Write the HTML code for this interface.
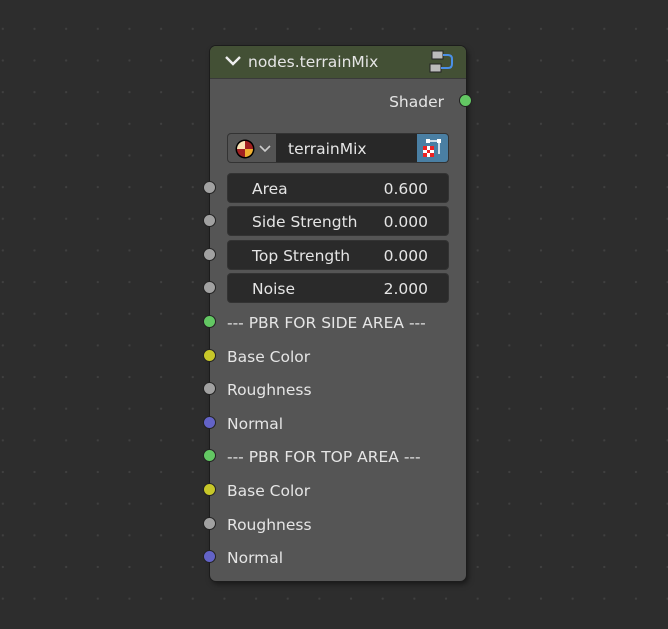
<!DOCTYPE html>
<html><head><style>
*{margin:0;padding:0;box-sizing:border-box}
body{width:668px;height:629px;overflow:hidden;background:#2d2d2d;
background-image:radial-gradient(#404040 1px,transparent 1.3px);background-size:31.67px 31.67px;background-position:-13px 13px;
font-family:"DejaVu Sans","Liberation Sans",sans-serif;color:#e5e5e5;font-size:15.5px;position:relative}
.node{position:absolute;left:210px;top:46px;width:256px;height:535px;background:#555;border-radius:6px;box-shadow:0 0 0 1px #1c1c1c,2px 3px 6px rgba(0,0,0,.5)}
.hdr{position:absolute;left:0;top:0;width:256px;height:33px;background:#435035;border-radius:6px 6px 0 0;border-bottom:1px solid #3a3a3a}
.t{position:absolute;white-space:nowrap;line-height:20px;margin-top:1px}
.s{position:absolute;width:13px;height:13px;border-radius:50%;border:1px solid #222}
.f{position:absolute;left:17px;width:222px;height:30px;background:#2a2a2a;border-radius:4px;border:1px solid #333}
.f span{position:absolute;top:5px;line-height:20px}
</style></head><body>
<div class="node">
 <div class="hdr">
  <svg style="position:absolute;left:14px;top:8px" width="18" height="14"><path d="M2 3 L9 10 L16 3" stroke="#eee" stroke-width="2.4" fill="none"/></svg>
  <div class="t" style="left:38px;top:5px">nodes.terrainMix</div>
  <svg style="position:absolute;left:219px;top:3px" width="26" height="26"><rect x="3" y="2" width="11" height="8" fill="#bbb" stroke="#222"/><rect x="1" y="15" width="11" height="8" fill="#bbb" stroke="#222"/><path d="M14 6 H19 Q23 6 23 10 V15 Q23 19 19 19 H12" stroke="#4a8fe8" stroke-width="2" fill="none"/></svg>
 </div>
 <div class="t" style="right:22px;top:45px">Shader</div>
 <div class="s" style="left:249px;top:48px;background:#63c763"></div>
 <div style="position:absolute;left:17px;top:87px;width:222px;height:30px;border-radius:4px;background:#282828;border:1px solid #333;overflow:hidden">
  <div style="position:absolute;left:0;top:0;width:48px;height:30px;background:#545454"></div>
  <svg style="position:absolute;left:6px;top:4px" width="22" height="22"><circle cx="11" cy="11" r="9.5" fill="#000"/><path d="M11 3 A8 8 0 0 0 3 11 H11Z" fill="#fbe3b5"/><path d="M11 3 A8 8 0 0 1 19 11 H11Z" fill="#a02020"/><path d="M3 11 A8 8 0 0 0 11 19 V11Z" fill="#a02020"/><path d="M19 11 A8 8 0 0 1 11 19 V11Z" fill="#f0b030"/></svg>
  <svg style="position:absolute;left:31px;top:11px" width="12" height="8"><path d="M1 1 L6 6 L11 1" stroke="#ccc" stroke-width="1.6" fill="none"/></svg>
  <div class="t" style="left:60px;top:4px">terrainMix</div>
  <div style="position:absolute;right:0;top:0;width:31px;height:30px;background:#4a7fa3"></div>
  <svg style="position:absolute;right:5px;top:4px" width="22" height="22"><rect x="2" y="8" width="11" height="11" fill="#fff"/><rect x="2" y="8" width="4" height="4" fill="#e22"/><rect x="9" y="8" width="4" height="4" fill="#e22"/><rect x="6" y="12" width="3" height="3" fill="#e22"/><rect x="2" y="15" width="4" height="4" fill="#e22"/><rect x="9" y="15" width="4" height="4" fill="#e22"/><path d="M7 3 H18 V16" stroke="#fff" stroke-width="1.5" fill="none"/><rect x="5" y="1" width="4" height="4" fill="#fff"/><rect x="16" y="1" width="4" height="4" fill="#fff"/></svg>
 </div>
 <div class="f" style="top:127px"><span style="left:24px">Area</span><span style="right:20px">0.600</span></div>
 <div class="f" style="top:160px"><span style="left:24px">Side Strength</span><span style="right:20px">0.000</span></div>
 <div class="f" style="top:194px"><span style="left:24px">Top Strength</span><span style="right:20px">0.000</span></div>
 <div class="f" style="top:227px"><span style="left:24px">Noise</span><span style="right:20px">2.000</span></div>
 <div class="s" style="left:-7px;top:135px;background:#a1a1a1"></div>
 <div class="s" style="left:-7px;top:168px;background:#a1a1a1"></div>
 <div class="s" style="left:-7px;top:202px;background:#a1a1a1"></div>
 <div class="s" style="left:-7px;top:235px;background:#a1a1a1"></div>

 <div class="s" style="left:-7px;top:269px;background:#63c763"></div><div class="t" style="left:17px;top:266px">--- PBR FOR SIDE AREA ---</div>
 <div class="s" style="left:-7px;top:303px;background:#c7c729"></div><div class="t" style="left:17px;top:300px">Base Color</div>
 <div class="s" style="left:-7px;top:336px;background:#a1a1a1"></div><div class="t" style="left:17px;top:333px">Roughness</div>
 <div class="s" style="left:-7px;top:370px;background:#6363c7"></div><div class="t" style="left:17px;top:367px">Normal</div>
 <div class="s" style="left:-7px;top:403px;background:#63c763"></div><div class="t" style="left:17px;top:400px">--- PBR FOR TOP AREA ---</div>
 <div class="s" style="left:-7px;top:437px;background:#c7c729"></div><div class="t" style="left:17px;top:434px">Base Color</div>
 <div class="s" style="left:-7px;top:471px;background:#a1a1a1"></div><div class="t" style="left:17px;top:468px">Roughness</div>
 <div class="s" style="left:-7px;top:504px;background:#6363c7"></div><div class="t" style="left:17px;top:501px">Normal</div>
</div>
</body></html>
